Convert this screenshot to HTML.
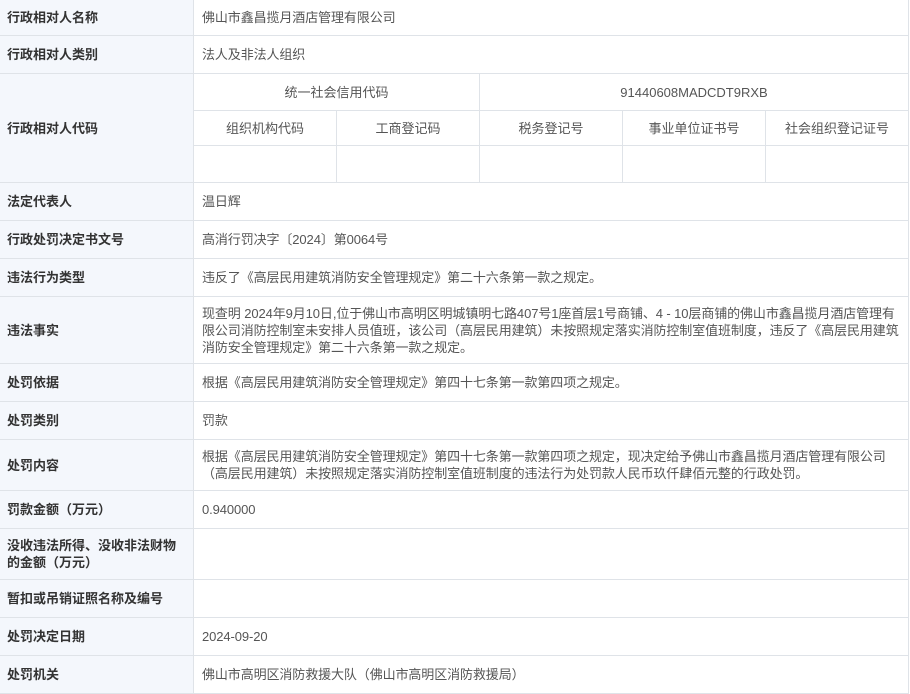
<!DOCTYPE html>
<html><head><meta charset="utf-8"><style>
*{margin:0;padding:0;box-sizing:border-box}
body{width:910px;height:691px;background:#fff;font-family:"Liberation Sans","Noto Sans CJK SC",sans-serif;font-size:13px;position:relative;overflow:hidden}
.c{position:absolute;border-right:1px solid #dfe3e8;border-bottom:1px solid #dfe3e8;display:flex;align-items:center;line-height:17px}
.l{left:0;width:194px;background:#f4f7fc;color:#333;font-weight:bold;padding-left:7px;padding-right:12px}
.v{left:194px;width:715px;color:#555;padding:0 4px 0 8px;letter-spacing:-0.1px}
.s{justify-content:center;color:#555}
</style></head><body>
<div class="c l" style="top:0;height:36px">行政相对人名称</div>
<div class="c v" style="top:0;height:36px">佛山市鑫昌揽月酒店管理有限公司</div>
<div class="c l" style="top:36px;height:38px">行政相对人类别</div>
<div class="c v" style="top:36px;height:38px">法人及非法人组织</div>
<div class="c l" style="top:74px;height:109px">行政相对人代码</div>
<div class="c s" style="top:74px;left:194px;width:286px;height:37px">统一社会信用代码</div>
<div class="c s" style="top:74px;left:480px;width:429px;height:37px">91440608MADCDT9RXB</div>
<div class="c s" style="top:111px;left:194px;width:143px;height:35px">组织机构代码</div>
<div class="c s" style="top:111px;left:337px;width:143px;height:35px">工商登记码</div>
<div class="c s" style="top:111px;left:480px;width:143px;height:35px">税务登记号</div>
<div class="c s" style="top:111px;left:623px;width:143px;height:35px">事业单位证书号</div>
<div class="c s" style="top:111px;left:766px;width:143px;height:35px">社会组织登记证号</div>
<div class="c s" style="top:146px;left:194px;width:143px;height:37px"></div>
<div class="c s" style="top:146px;left:337px;width:143px;height:37px"></div>
<div class="c s" style="top:146px;left:480px;width:143px;height:37px"></div>
<div class="c s" style="top:146px;left:623px;width:143px;height:37px"></div>
<div class="c s" style="top:146px;left:766px;width:143px;height:37px"></div>
<div class="c l" style="top:183px;height:38px">法定代表人</div>
<div class="c v" style="top:183px;height:38px">温日辉</div>
<div class="c l" style="top:221px;height:38px">行政处罚决定书文号</div>
<div class="c v" style="top:221px;height:38px">高消行罚决字〔2024〕第0064号</div>
<div class="c l" style="top:259px;height:38px">违法行为类型</div>
<div class="c v" style="top:259px;height:38px">违反了《高层民用建筑消防安全管理规定》第二十六条第一款之规定。</div>
<div class="c l" style="top:297px;height:67px">违法事实</div>
<div class="c v" style="top:297px;height:67px">现查明 2024年9月10日,位于佛山市高明区明城镇明七路407号1座首层1号商铺、4 - 10层商铺的佛山市鑫昌揽月酒店管理有限公司消防控制室未安排人员值班，该公司（高层民用建筑）未按照规定落实消防控制室值班制度，违反了《高层民用建筑消防安全管理规定》第二十六条第一款之规定。</div>
<div class="c l" style="top:364px;height:38px">处罚依据</div>
<div class="c v" style="top:364px;height:38px">根据《高层民用建筑消防安全管理规定》第四十七条第一款第四项之规定。</div>
<div class="c l" style="top:402px;height:38px">处罚类别</div>
<div class="c v" style="top:402px;height:38px">罚款</div>
<div class="c l" style="top:440px;height:51px">处罚内容</div>
<div class="c v" style="top:440px;height:51px">根据《高层民用建筑消防安全管理规定》第四十七条第一款第四项之规定，现决定给予佛山市鑫昌揽月酒店管理有限公司（高层民用建筑）未按照规定落实消防控制室值班制度的违法行为处罚款人民币玖仟肆佰元整的行政处罚。</div>
<div class="c l" style="top:491px;height:38px">罚款金额（万元）</div>
<div class="c v" style="top:491px;height:38px">0.940000</div>
<div class="c l" style="top:529px;height:51px">没收违法所得、没收非法财物<br>的金额（万元）</div>
<div class="c v" style="top:529px;height:51px"></div>
<div class="c l" style="top:580px;height:38px">暂扣或吊销证照名称及编号</div>
<div class="c v" style="top:580px;height:38px"></div>
<div class="c l" style="top:618px;height:38px">处罚决定日期</div>
<div class="c v" style="top:618px;height:38px">2024-09-20</div>
<div class="c l" style="top:656px;height:38px">处罚机关</div>
<div class="c v" style="top:656px;height:38px">佛山市高明区消防救援大队（佛山市高明区消防救援局）</div>
</body></html>
